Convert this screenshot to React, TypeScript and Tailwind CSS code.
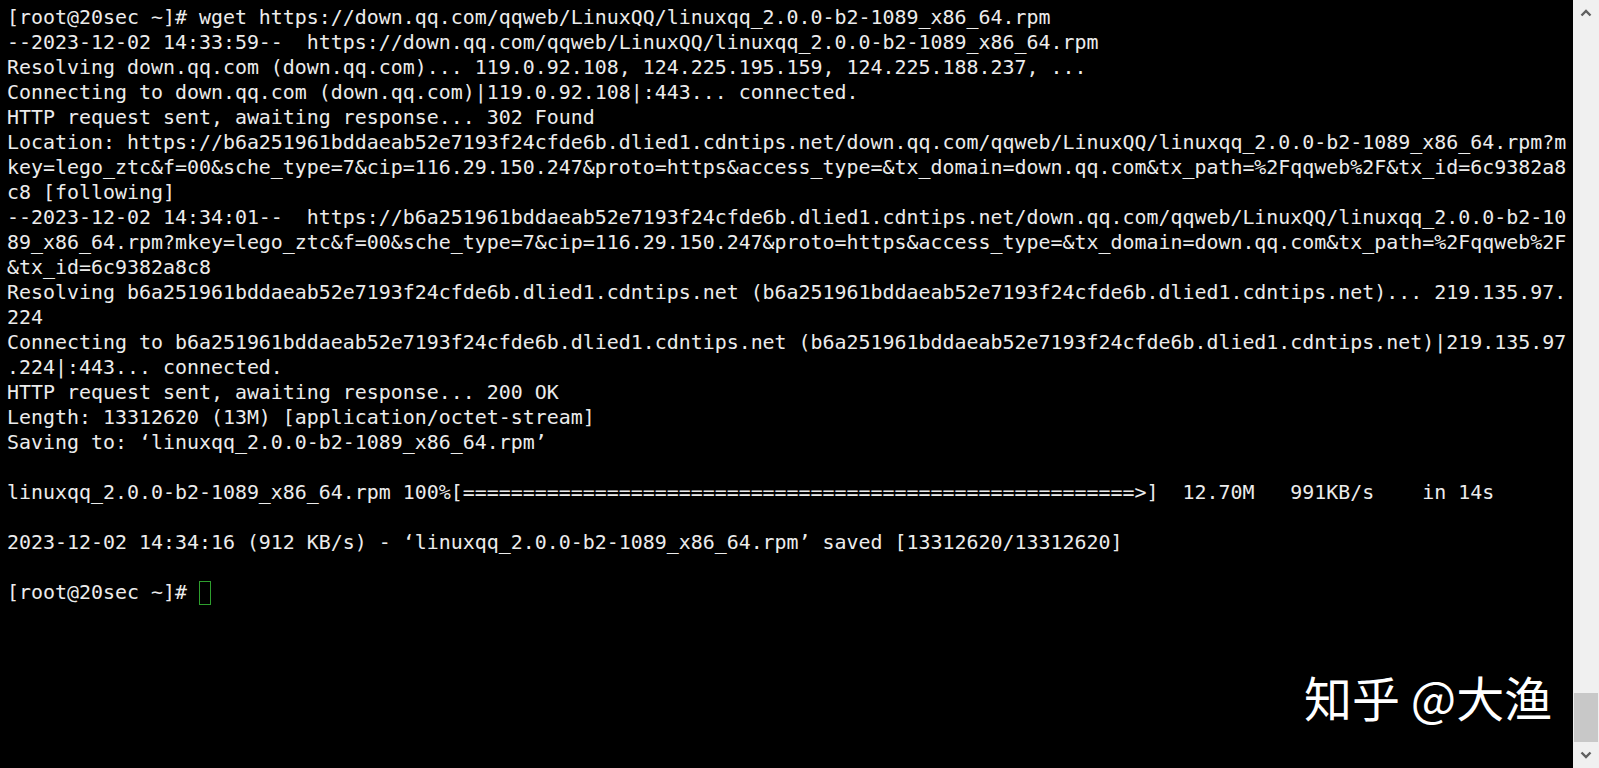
import React from "react";

const bar = "=".repeat(56) + ">";

const lines: string[] = [
  "[root@20sec ~]# wget https://down.qq.com/qqweb/LinuxQQ/linuxqq_2.0.0-b2-1089_x86_64.rpm",
  "--2023-12-02 14:33:59--  https://down.qq.com/qqweb/LinuxQQ/linuxqq_2.0.0-b2-1089_x86_64.rpm",
  "Resolving down.qq.com (down.qq.com)... 119.0.92.108, 124.225.195.159, 124.225.188.237, ...",
  "Connecting to down.qq.com (down.qq.com)|119.0.92.108|:443... connected.",
  "HTTP request sent, awaiting response... 302 Found",
  "Location: https://b6a251961bddaeab52e7193f24cfde6b.dlied1.cdntips.net/down.qq.com/qqweb/LinuxQQ/linuxqq_2.0.0-b2-1089_x86_64.rpm?m",
  "key=lego_ztc&f=00&sche_type=7&cip=116.29.150.247&proto=https&access_type=&tx_domain=down.qq.com&tx_path=%2Fqqweb%2F&tx_id=6c9382a8",
  "c8 [following]",
  "--2023-12-02 14:34:01--  https://b6a251961bddaeab52e7193f24cfde6b.dlied1.cdntips.net/down.qq.com/qqweb/LinuxQQ/linuxqq_2.0.0-b2-10",
  "89_x86_64.rpm?mkey=lego_ztc&f=00&sche_type=7&cip=116.29.150.247&proto=https&access_type=&tx_domain=down.qq.com&tx_path=%2Fqqweb%2F",
  "&tx_id=6c9382a8c8",
  "Resolving b6a251961bddaeab52e7193f24cfde6b.dlied1.cdntips.net (b6a251961bddaeab52e7193f24cfde6b.dlied1.cdntips.net)... 219.135.97.",
  "224",
  "Connecting to b6a251961bddaeab52e7193f24cfde6b.dlied1.cdntips.net (b6a251961bddaeab52e7193f24cfde6b.dlied1.cdntips.net)|219.135.97",
  ".224|:443... connected.",
  "HTTP request sent, awaiting response... 200 OK",
  "Length: 13312620 (13M) [application/octet-stream]",
  "Saving to: \u2018linuxqq_2.0.0-b2-1089_x86_64.rpm\u2019",
  "",
  "linuxqq_2.0.0-b2-1089_x86_64.rpm 100%[" + bar + "]  12.70M   991KB/s    in 14s",
  "",
  "2023-12-02 14:34:16 (912 KB/s) - \u2018linuxqq_2.0.0-b2-1089_x86_64.rpm\u2019 saved [13312620/13312620]",
  "",
];

function Chevron({ up }: { up: boolean }) {
  return (
    <svg width="12" height="8" viewBox="0 0 12 8">
      <path
        d={up ? "M1.5 6.5 L6 2 L10.5 6.5" : "M1.5 1.5 L6 6 L10.5 1.5"}
        fill="none"
        stroke="#606060"
        strokeWidth="2.4"
      />
    </svg>
  );
}

export default function App() {
  return (
    <div className="flex h-screen w-full overflow-hidden bg-black">
      <div className="relative flex-1 bg-black">
        <div className="pl-[7px] pt-[5px] font-['DejaVu_Sans_Mono',monospace] text-[19.93px] leading-[25px] text-[#ececec] whitespace-pre">
          {lines.map((l, i) => (
            <div key={i} className="h-[25px]">
              {l}
            </div>
          ))}
          <div className="flex h-[25px] items-center">
            <span>{"[root@20sec ~]# "}</span>
            <span className="h-[24px] w-[12px] border border-[#2e9f2e]" />
          </div>
        </div>
        <div className="absolute left-[1304px] top-[672px] font-['Noto_Sans_CJK_SC',sans-serif] text-[48px] leading-none text-white whitespace-pre">
          知乎 @大渔
        </div>
      </div>
      <div className="flex h-full w-[26px] flex-col bg-[#f0f0f0]">
        <div className="flex h-[26px] items-center justify-center">
          <Chevron up />
        </div>
        <div className="flex flex-1 flex-col justify-end">
          <div className="mx-auto h-[49px] w-[24px] bg-[#c8c8c8]" />
        </div>
        <div className="flex h-[26px] items-center justify-center">
          <Chevron up={false} />
        </div>
      </div>
    </div>
  );
}
